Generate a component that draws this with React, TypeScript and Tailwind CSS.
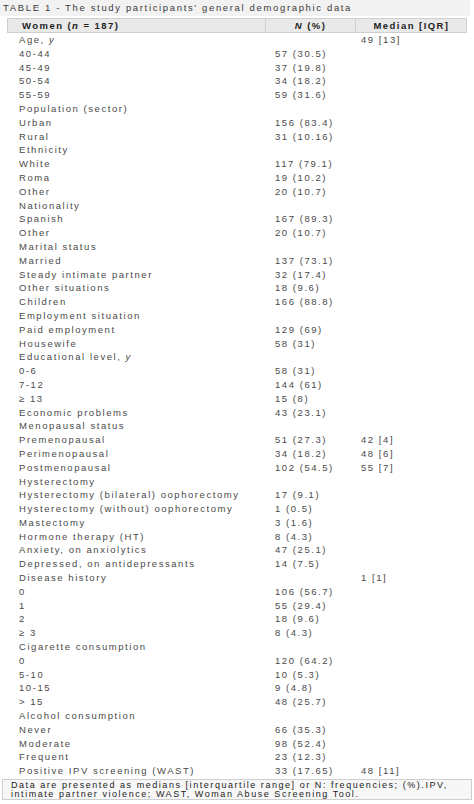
import React from "react"

type Row = { label: React.ReactNode; n?: string; median?: string }

const rows: Row[] = [
  { label: <>Age, <i>y</i></>, median: "49 [13]" },
  { label: "40-44", n: "57 (30.5)" },
  { label: "45-49", n: "37 (19.8)" },
  { label: "50-54", n: "34 (18.2)" },
  { label: "55-59", n: "59 (31.6)" },
  { label: "Population (sector)" },
  { label: "Urban", n: "156 (83.4)" },
  { label: "Rural", n: "31 (10.16)" },
  { label: "Ethnicity" },
  { label: "White", n: "117 (79.1)" },
  { label: "Roma", n: "19 (10.2)" },
  { label: "Other", n: "20 (10.7)" },
  { label: "Nationality" },
  { label: "Spanish", n: "167 (89.3)" },
  { label: "Other", n: "20 (10.7)" },
  { label: "Marital status" },
  { label: "Married", n: "137 (73.1)" },
  { label: "Steady intimate partner", n: "32 (17.4)" },
  { label: "Other situations", n: "18 (9.6)" },
  { label: "Children", n: "166 (88.8)" },
  { label: "Employment situation" },
  { label: "Paid employment", n: "129 (69)" },
  { label: "Housewife", n: "58 (31)" },
  { label: <>Educational level, <i>y</i></> },
  { label: "0-6", n: "58 (31)" },
  { label: "7-12", n: "144 (61)" },
  { label: "≥ 13", n: "15 (8)" },
  { label: "Economic problems", n: "43 (23.1)" },
  { label: "Menopausal status" },
  { label: "Premenopausal", n: "51 (27.3)", median: "42 [4]" },
  { label: "Perimenopausal", n: "34 (18.2)", median: "48 [6]" },
  { label: "Postmenopausal", n: "102 (54.5)", median: "55 [7]" },
  { label: "Hysterectomy" },
  { label: "Hysterectomy (bilateral) oophorectomy", n: "17 (9.1)" },
  { label: "Hysterectomy (without) oophorectomy", n: "1 (0.5)" },
  { label: "Mastectomy", n: "3 (1.6)" },
  { label: "Hormone therapy (HT)", n: "8 (4.3)" },
  { label: "Anxiety, on anxiolytics", n: "47 (25.1)" },
  { label: "Depressed, on antidepressants", n: "14 (7.5)" },
  { label: "Disease history", median: "1 [1]" },
  { label: "0", n: "106 (56.7)" },
  { label: "1", n: "55 (29.4)" },
  { label: "2", n: "18 (9.6)" },
  { label: "≥ 3", n: "8 (4.3)" },
  { label: "Cigarette consumption" },
  { label: "0", n: "120 (64.2)" },
  { label: "5-10", n: "10 (5.3)" },
  { label: "10-15", n: "9 (4.8)" },
  { label: "> 15", n: "48 (25.7)" },
  { label: "Alcohol consumption" },
  { label: "Never", n: "66 (35.3)" },
  { label: "Moderate", n: "98 (52.4)" },
  { label: "Frequent", n: "23 (12.3)" },
  { label: "Positive IPV screening (WAST)", n: "33 (17.65)", median: "48 [11]" },
]

export default function App() {
  return (
    <div className="w-[474px] h-[804px] bg-white text-[#4a4a4a] font-['Liberation_Sans',Arial,sans-serif] text-[9.5px] tracking-[1.55px] overflow-hidden">
      {/* Caption */}
      <div className="h-[16px] mr-[4px] bg-[#f2f2f2] pl-[3px] flex items-center tracking-[1.65px] text-[#3a3a3a]">
        TABLE 1 - The study participants' general demographic data
      </div>

      <div className="mx-[7px] mt-[2px]">
        {/* Header */}
        <div className="grid grid-cols-[258px_90px_111px] h-[15px] bg-[#e9e9e9] border border-[#cfcfcf] font-bold text-[#222] tracking-[1.45px]">
          <div className="pl-[14px] flex items-center border-r border-[#cfcfcf]">
            Women (<i>n</i>&nbsp;= 187)
          </div>
          <div className="flex items-center justify-center border-r border-[#cfcfcf]">
            <i>N</i>&nbsp;(%)
          </div>
          <div className="flex items-center justify-center">Median [IQR]</div>
        </div>

        {/* Body */}
        {rows.map((r, i) => (
          <div key={i} className="grid grid-cols-[258px_90px_111px] h-[13.8px] items-center whitespace-nowrap">
            <div className="pl-[12px]">{r.label}</div>
            <div className="pl-[10px]">{r.n}</div>
            <div className="pl-[6px]">{r.median}</div>
          </div>
        ))}
      </div>

      {/* Footnote */}
      <div className="mx-[2px] mt-[1px] h-[21px] border border-[#cfcfcf] bg-[#f7f7f7] pl-[8px] pt-[1px] text-[9px] leading-[9px] tracking-[1.55px] text-[#222] whitespace-nowrap">
        Data are presented as medians [interquartile range] or N: frequencies; (%).IPV,
        <br />
        intimate partner violence; WAST, Woman Abuse Screening Tool.
      </div>
    </div>
  )
}
